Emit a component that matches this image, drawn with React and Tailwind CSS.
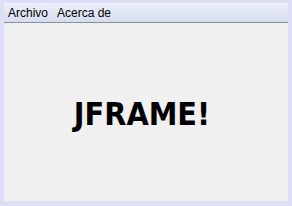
export default function App() {
  return (
    <div className="w-[292px] h-[206px] bg-[#dedef7] flex flex-col pt-[3px] pl-[4px] pr-[4px] pb-[5px]">
      <div className="h-[20px] flex items-center pl-[4px] pt-[1px] gap-[9px] bg-gradient-to-b from-[#eef0fb] to-[#d5dcf0] border-b border-[#8c9098] text-[12px] text-black leading-none font-['Liberation_Sans',Arial,sans-serif]">
        <span>Archivo</span>
        <span>Acerca de</span>
      </div>
      <div className="flex-1 bg-[#f0f0f0] border-l-[3px] border-[#ececf8] flex items-center justify-center">
        <span className="text-[32px] font-bold text-black mt-[3px] mr-[11px] leading-none font-['DejaVu_Sans_Condensed','DejaVu_Sans',sans-serif] [font-stretch:condensed]">JFRAME!</span>
      </div>
    </div>
  );
}
